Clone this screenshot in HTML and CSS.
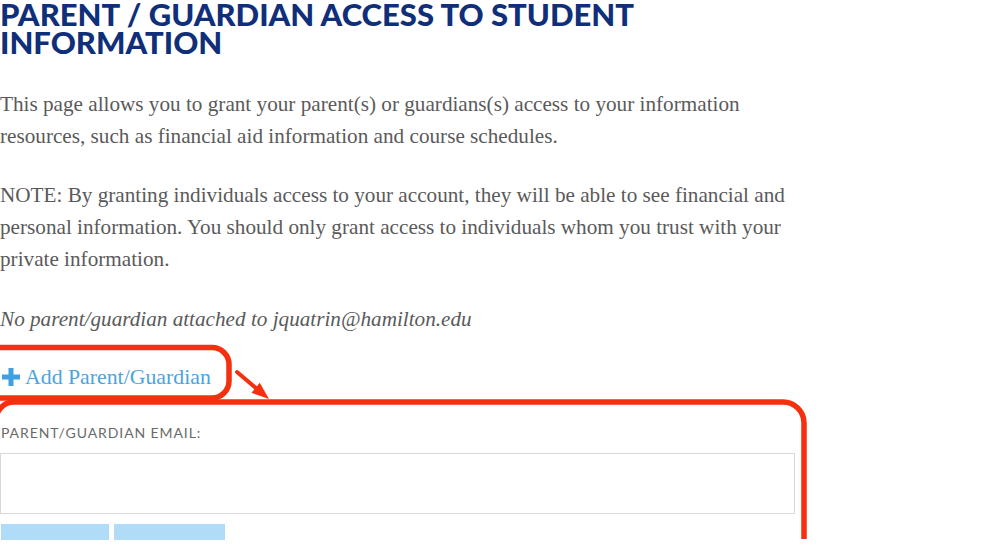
FILE: index.html
```html
<!DOCTYPE html>
<html lang="en">
<head>
<meta charset="utf-8">
<title>Parent / Guardian Access</title>
<link rel="stylesheet" href="styles.css">
</head>
<body>
<div class="page">
  <main class="content">
    <h1 class="title">PARENT / GUARDIAN ACCESS TO STUDENT INFORMATION</h1>
    <p class="text text-intro">This page allows you to grant your parent(s) or guardians(s) access to your information resources, such as financial aid information and course schedules.</p>
    <p class="text text-note">NOTE: By granting individuals access to your account, they will be able to see financial and personal information. You should only grant access to individuals whom you trust with your private information.</p>
    <p class="text text-empty">No parent/guardian attached to jquatrin@hamilton.edu</p>
    <a class="add-link" href="#">
      <svg class="plus" viewBox="0 0 18 18" width="18" height="18" aria-hidden="true"><path d="M9 0v18M0 9h18" stroke="#3f9fe0" stroke-width="5" fill="none"/></svg>
      <span>Add Parent/Guardian</span>
    </a>
    <form class="form">
      <label class="label" for="email">PARENT/GUARDIAN EMAIL:</label>
      <input class="input" id="email" type="text">
      <div class="buttons">
        <button class="btn btn-a" type="button"></button>
        <button class="btn btn-b" type="button"></button>
      </div>
    </form>
  </main>
  <svg class="annot" width="981" height="552" viewBox="0 0 981 552" aria-hidden="true">
    <g fill="none" stroke="#f4300f" stroke-width="5.5" stroke-linejoin="round">
      <path d="M-3 347.5 H212 a17 17 0 0 1 17 17 V381 a17 17 0 0 1 -17 17 H-3"/>
      <path d="M-4 539 V420 a18 18 0 0 1 18 -18 H783 a21 21 0 0 1 21 21 V539"/>
      <path d="M237 372 L257 389" stroke-width="4" stroke-linecap="round"/>
    </g>
    <polygon points="269,399 251.5,392.8 259.8,382.8" fill="#f4300f"/>
  </svg>
</div>
</body>
</html>
```
FILE: styles.css
```css
html, body {
  margin: 0;
  padding: 0;
  background: #ffffff;
}

.page {
  position: relative;
  width: 981px;
  height: 552px;
  overflow: hidden;
}

.content {
  width: 796px;
  display: flex;
  flex-direction: column;
  align-items: flex-start;
}

.title {
  margin: 0;
  font-family: Lato, "Open Sans", sans-serif;
  font-weight: 900;
  font-size: 31px;
  line-height: 28px;
  letter-spacing: 0;
  color: #102f7a;
}

.text {
  margin: 0;
  font-family: "Liberation Serif", serif;
  font-size: 21.2px;
  line-height: 32px;
  color: #5a5a5a;
}

.text-intro {
  margin-top: 32px;
}

.text-note {
  margin-top: 27px;
}

.text-empty {
  margin-top: 28px;
  font-style: italic;
}

.add-link {
  margin-top: 26px;
  display: flex;
  align-items: center;
  gap: 5px;
  padding-left: 2px;
  font-family: "Liberation Serif", serif;
  font-size: 21.8px;
  line-height: 32px;
  color: #4ba4de;
  text-decoration: none;
}

.plus {
  display: block;
}

.form {
  margin-top: 32px;
  width: 796px;
  display: flex;
  flex-direction: column;
}

.label {
  font-family: Lato, sans-serif;
  font-weight: 400;
  font-size: 14px;
  line-height: 16px;
  letter-spacing: 0.9px;
  color: #6a6a6a;
  padding-left: 1px;
}

.input {
  margin-top: 12px;
  box-sizing: border-box;
  width: 795px;
  height: 61px;
  border: 1px solid #d9d9d9;
  background: #fff;
  padding: 0;
}

.buttons {
  margin-top: 10px;
  display: flex;
  gap: 5px;
  padding-left: 1px;
}

.btn {
  height: 16px;
  border: 0;
  padding: 0;
  background: #b1dcf8;
}

.btn-a {
  width: 108px;
}

.btn-b {
  width: 111px;
}

.annot {
  position: absolute;
  top: 0;
  left: 0;
  pointer-events: none;
}
```
